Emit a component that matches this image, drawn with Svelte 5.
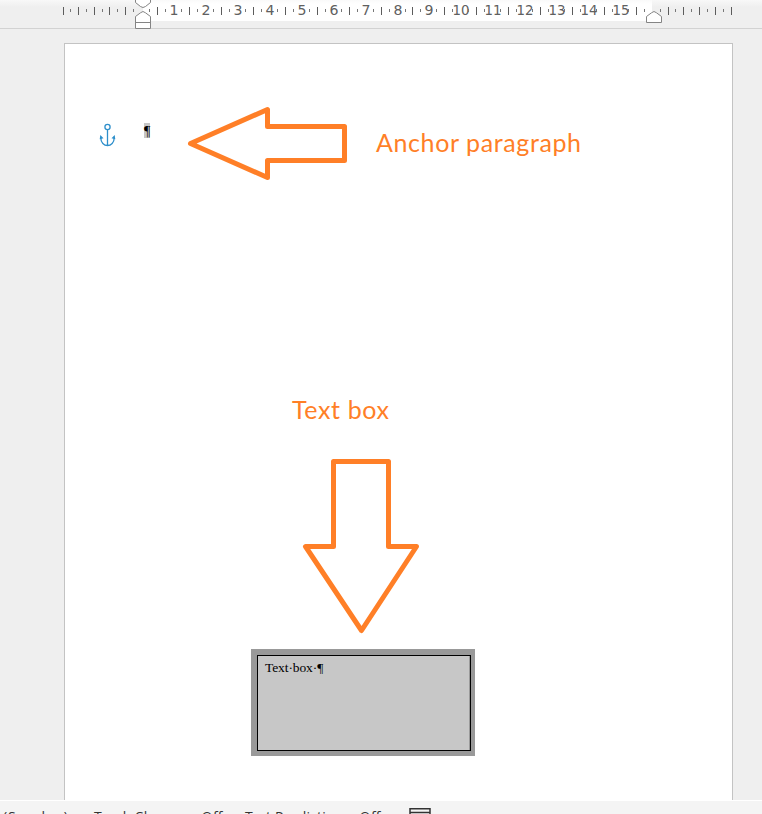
<script>
  // quarter-centimetre marks from -2.5 cm to 18.5 cm
  const marks = [];
  for (let q = -10; q <= 74; q++) {
    if (q === 0 || q === 64) continue;
    const x = q < 0 ? Math.floor(141.2 + q * 7.8) : Math.round(141.5 + q * 7.97);
    const labelled = q > 0 && q < 64 && q % 4 === 0;
    marks.push({ x, q, labelled, tall: q % 2 === 0 });
  }
</script>

<div class="window">
  <header class="ruler">
    <svg width="762" height="29" viewBox="0 0 762 29">
      <defs>
        <linearGradient id="fade" x1="0" y1="0" x2="0" y2="1">
          <stop offset="0" stop-color="#f8f8f8" />
          <stop offset="1" stop-color="#efefef" />
        </linearGradient>
        <linearGradient id="active" x1="0" y1="0" x2="0" y2="1">
          <stop offset="0" stop-color="#fafafa" />
          <stop offset="1" stop-color="#ffffff" />
        </linearGradient>
      </defs>
      <rect width="762" height="7" fill="url(#fade)" />
      <rect x="143" width="509" height="21" fill="#fff" />
      <rect x="143" width="509" height="4" fill="url(#active)" />
      {#each marks as m (m.q)}
        {#if m.labelled}
          <text x={m.x + 1} y="15" text-anchor="middle" textLength={m.q >= 40 ? 17 : 9} lengthAdjust="spacingAndGlyphs">{m.q / 4}</text>
        {:else if m.tall}
          <rect x={m.x} y="7" width="1" height="8" fill="#5c5c5c" />
        {:else}
          <rect x={m.x} y="9" width="1" height="3" fill="#777" />
        {/if}
      {/each}
      <rect y="28" width="762" height="1" fill="#d2d2d2" />
      <g fill="#fff" stroke="#848484">
        <path d="M135.500 -1V2.500L140.500 6.500L143 7.500L145.500 6.500L150.500 2.500V-1Z" />
        <path d="M135.500 28.500V16.500L140.500 12.800L143 11.500L145.500 12.800L150.500 16.500V28.500ZM135.500 22.500H150.500" />
        <path d="M646.500 22.500V16.500L651.500 12.800L654 11.500L656.500 12.800L661.500 16.500V22.500Z" />
      </g>
    </svg>
  </header>

  <main class="workspace">
    <section class="page">
      <svg class="notes" width="667" height="756" viewBox="65 44 667 756">
        <g fill="none" stroke="#2e8fcb" stroke-width="1.3">
          <circle cx="107.500" cy="127" r="2.600" />
          <path d="M107.500 129.600V145.500M100.800 138C100.800 142.500 104 145.500 107.500 145.500S114.200 142.500 114.200 138" />
        </g>
        <path d="M99.700 139.200L100.300 135L103.500 138.200ZM115.300 139.200L114.700 135L111.500 138.200Z" fill="#2e8fcb" />
        <g fill="none" stroke="#ff7f27" stroke-width="5" stroke-linejoin="round">
          <path d="M190.500 143.500L267.500 109.500V126.500H344.500V160.500H267.500V177.500Z" />
          <path d="M333.500 461.500H388.500V546.500H416.500L361.500 630.500L305.500 546.500H333.500Z" />
        </g>
        <g class="caption">
          <text x="376" y="152" textLength="205">Anchor paragraph</text>
          <text x="292" y="419" textLength="97">Text box</text>
        </g>
      </svg>
      <span class="mark">¶</span>
      <div class="textbox"><div class="inner">Text·box·¶</div></div>
    </section>
  </main>

  <footer class="status">
    <svg width="762" height="14" viewBox="0 0 762 14">
      <g class="label">
        <text x="3" y="21" textLength="65">(Sweden)</text>
        <text x="94" y="21" textLength="36">Track</text>
        <text x="134.500" y="21" textLength="62">Changes:</text>
        <text x="201.500" y="21" textLength="21">Off</text>
        <text x="245" y="21" textLength="26">Text</text>
        <text x="275" y="21" textLength="79">Predictions:</text>
        <text x="359.500" y="21" textLength="21">Off</text>
      </g>
      <path d="M410 16V7.800H430V16M410 11.500H430" fill="none" stroke="#333" stroke-width="1.500" />
      <path d="M423 13.500H428" stroke="#333" />
    </svg>
  </footer>
</div>

<style>
  :global(body) { margin: 0; }
  .window {
    display: flex;
    flex-direction: column;
    width: 762px;
    height: 814px;
    overflow: hidden;
    background: #efefef;
  }
  svg { display: block; }
  .ruler { height: 29px; flex: none; }
  .ruler text { font: 14px "DejaVu Sans", sans-serif; fill: #606060; }
  .workspace {
    flex: 1;
    min-height: 0;
    padding: 14px 29px 0 64px;
    overflow: hidden;
    display: flex;
  }
  .page {
    position: relative;
    flex: 1;
    border: 1px solid #c3c3c3;
    border-bottom: 0;
    background: #fff;
  }
  .caption text { font: 25px Lato, sans-serif; fill: #ff7f27; }
  .mark {
    position: absolute;
    left: 79px;
    top: 79px;
    width: 6px;
    height: 15px;
    background: #c6c6c6;
    font: 14px/17px "Liberation Serif", serif;
    color: #000;
  }
  .textbox {
    position: absolute;
    left: 186px;
    top: 605px;
    box-sizing: border-box;
    display: flex;
    width: 224px;
    height: 107px;
    padding: 6px 4px 5px 6px;
    background: #999;
  }
  .inner {
    flex: 1;
    padding: 4px 7px;
    border: 1px solid #000;
    background: #c7c7c7;
    box-shadow: inset -1px 0 #999;
    font: 13.5px/16px "Liberation Serif", serif;
    letter-spacing: -0.1px;
    color: #000;
    white-space: nowrap;
  }
  .status {
    flex: none;
    height: 13px;
    border-top: 1px solid #fff;
    background: #f4f4f4;
    overflow: hidden;
  }
  .label text { font: 14px "Open Sans", sans-serif; fill: #333; }
</style>
